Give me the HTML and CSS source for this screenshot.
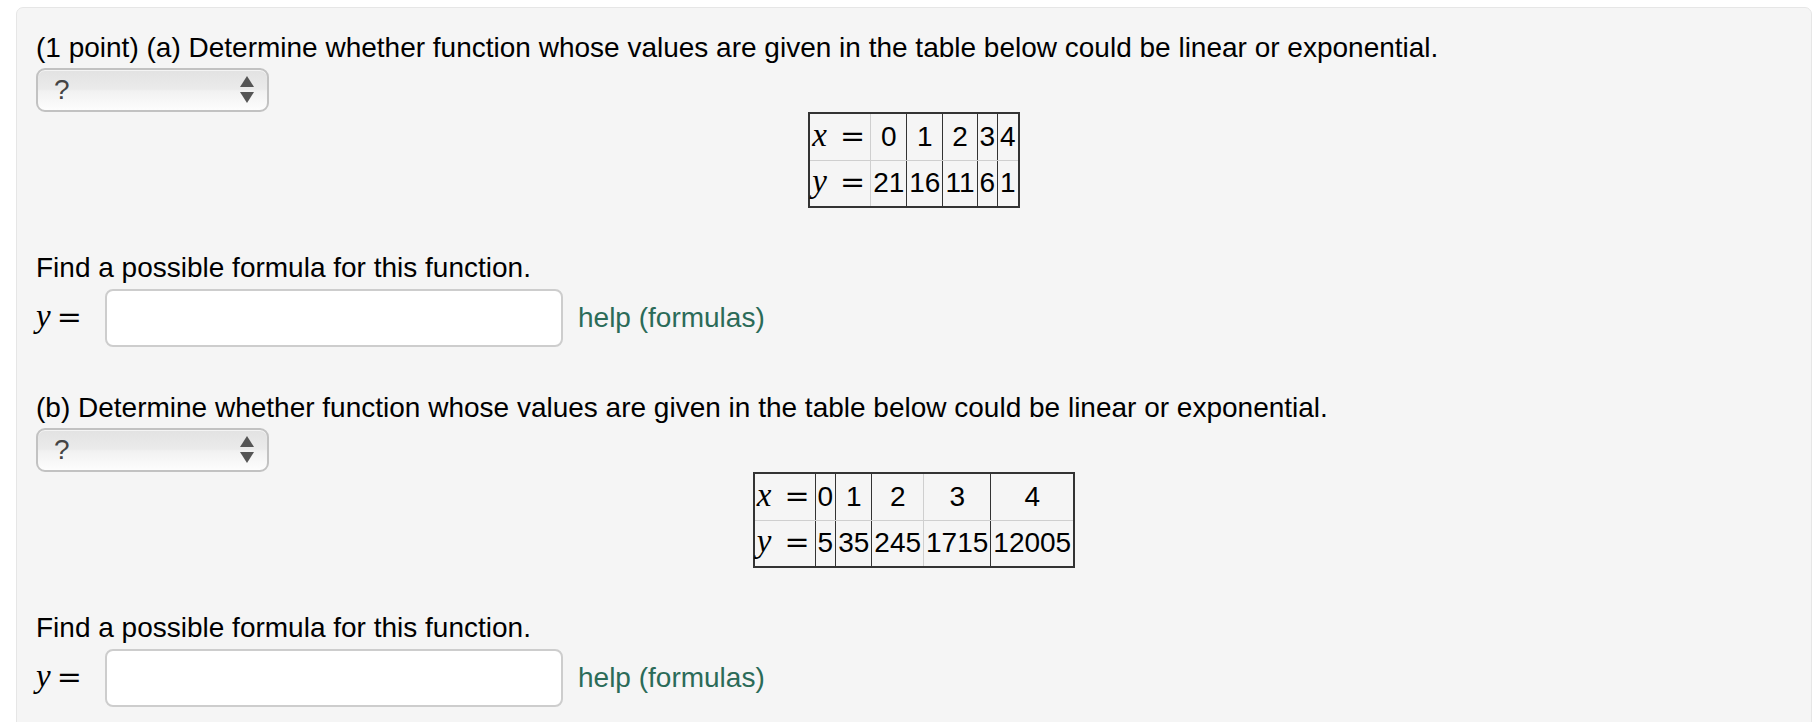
FILE: index.html
```html
<!DOCTYPE html>
<html lang="en">
<head>
    <meta charset="UTF-8">
    <title>Problem</title>
    <link rel="stylesheet" href="styles.css">
</head>
<body>
    <div class="problem">
        <!-- part (a) -->
        <div class="line">(1 point) (a) Determine whether function whose values are given in the table below could be linear or exponential.</div>
        <div class="popup">
            <span>?</span>
            <svg class="arrows" width="16" height="30" viewBox="0 0 16 30">
                <path d="M8 1 L15 12 L1 12 Z" fill="#555"/>
                <path d="M1 17 L15 17 L8 28 Z" fill="#555"/>
            </svg>
        </div>
        <table class="values">
            <tr>
                <td class="label soft"><i>x</i><span class="eq">=</span></td>
                <td>0</td><td>1</td><td>2</td><td>3</td><td class="soft">4</td>
            </tr>
            <tr>
                <td class="label soft"><i>y</i><span class="eq">=</span></td>
                <td>21</td><td>16</td><td>11</td><td>6</td><td class="soft">1</td>
            </tr>
        </table>

        <div class="line gap">Find a possible formula for this function.</div>
        <div class="answer">
            <span class="math"><i>y</i><span class="eq">=</span></span>
            <input type="text" class="answer-box">
            <a class="help" href="#">help (formulas)</a>
        </div>

        <!-- part (b) -->
        <div class="line gap">(b) Determine whether function whose values are given in the table below could be linear or exponential.</div>
        <div class="popup">
            <span>?</span>
            <svg class="arrows" width="16" height="30" viewBox="0 0 16 30">
                <path d="M8 1 L15 12 L1 12 Z" fill="#555"/>
                <path d="M1 17 L15 17 L8 28 Z" fill="#555"/>
            </svg>
        </div>
        <table class="values">
            <tr>
                <td class="label"><i>x</i><span class="eq">=</span></td>
                <td>0</td><td>1</td><td class="soft">2</td><td>3</td><td>4</td>
            </tr>
            <tr>
                <td class="label"><i>y</i><span class="eq">=</span></td>
                <td>5</td><td>35</td><td class="soft">245</td><td>1715</td><td>12005</td>
            </tr>
        </table>

        <div class="line gap">Find a possible formula for this function.</div>
        <div class="answer">
            <span class="math"><i>y</i><span class="eq">=</span></span>
            <input type="text" class="answer-box">
            <a class="help" href="#">help (formulas)</a>
        </div>
    </div>
</body>
</html>
```

FILE: styles.css
```css
* {
    box-sizing: border-box;
}

body {
    margin: 7px 2px 0 16px;
    background: #fff;
    font-family: "Liberation Sans", Arial, sans-serif;
    font-size: 28px;
    color: #000;
    overflow: hidden;
}

.problem {
    background: #f5f5f5;
    border: 1px solid #e6e6e6;
    border-radius: 7px;
    padding: 20px 19px 40px;
    min-height: 760px;
}

.line {
    line-height: 39px;
    white-space: nowrap;
}

.gap {
    margin-top: 40px;
}

.popup {
    width: 233px;
    height: 44px;
    margin-top: 1px;
    display: flex;
    align-items: center;
    justify-content: space-between;
    padding: 0 12px 0 16px;
    border: 2px solid #c2c2c2;
    border-radius: 9px;
    background: linear-gradient(#e2e2e2, #ebebeb 48%, #f1f1f1 52%, #fdfdfd);
    box-shadow: inset 0 1px 0 #f4f4f4;
    color: #444;
    font-size: 28px;
}

.arrows {
    display: block;
}

.values {
    margin: 0 auto;
    border-collapse: collapse;
    border: 2px solid #333;
}

.values td {
    height: 47px;
    padding: 0 2px;
    text-align: center;
    border-left: 1px solid #333;
    border-right: 1px solid #333;
    line-height: 44px;
}

.values tr:first-child td {
    border-bottom: 1px solid #cfcfcf;
}

.values td.soft {
    border-right-color: #cfcfcf;
}

.values td.label {
    text-align: left;
    padding: 0 5px 0 2px;
}

i {
    font-family: "Liberation Serif", "Times New Roman", serif;
    font-size: 33px;
    line-height: 20px;
}

.eq {
    font-family: "DejaVu Serif", serif;
    font-size: 30px;
    line-height: 20px;
    margin-left: 13px;
}

.answer {
    height: 61px;
    display: flex;
    align-items: center;
}

.math {
    width: 69px;
    white-space: nowrap;
}

.math .eq {
    margin-left: 6px;
}

.answer-box {
    width: 458px;
    height: 58px;
    border: 2px solid #cdcdcd;
    border-radius: 8px;
    background: #fff;
    margin-right: 15px;
    font-size: 28px;
}

.help {
    color: #2b6b58;
    text-decoration: none;
}
```
